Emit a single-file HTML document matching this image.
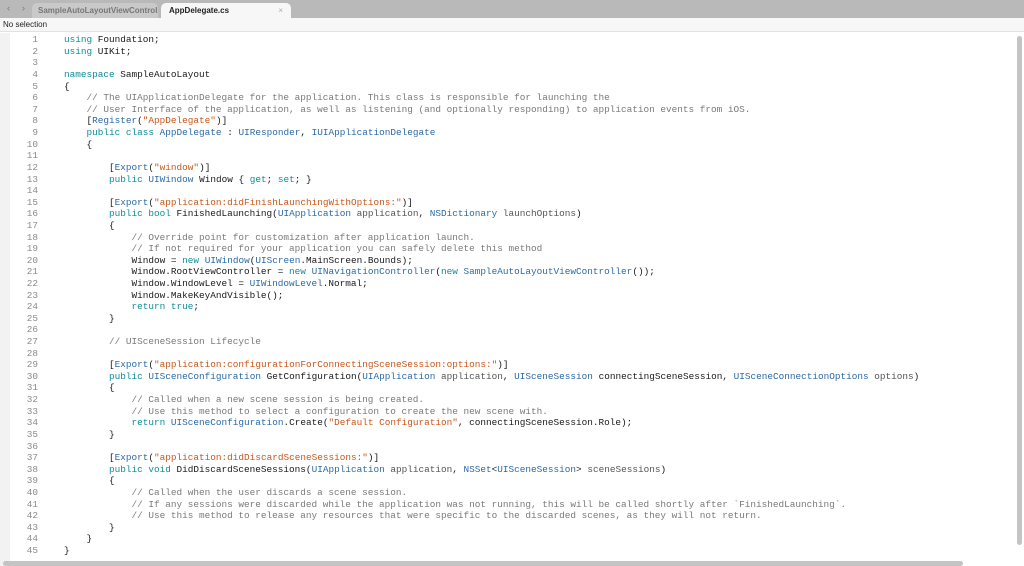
<!DOCTYPE html>
<html><head><meta charset="utf-8"><style>
html,body{margin:0;padding:0;width:1024px;height:566px;overflow:hidden;background:#fff;font-family:"Liberation Sans",sans-serif}
#tabs{position:absolute;left:0;top:0;width:1024px;height:18px;background:#b9b9b9}
.tab{position:absolute;top:3px;height:15px;font-size:8px;line-height:15px;border-radius:5px 5px 0 0;font-weight:bold}
#t1{left:32px;width:126px;background:#c9c9c9;color:#777;padding-left:6px;box-sizing:border-box;white-space:nowrap;overflow:hidden}
#t2{left:161px;width:130px;background:#f7f7f7;color:#222;padding-left:8px;box-sizing:border-box}
#t2 span{position:absolute;right:8px;top:0;color:#aaa;font-weight:normal}
.nav{position:absolute;top:3px;font-size:9px;color:#777}
#bar{position:absolute;left:0;top:18px;width:1024px;height:14px;background:#f7f7f7;border-bottom:1px solid #e2e2e2;font-size:8px;line-height:14px;color:#222;padding-left:3px;box-sizing:border-box}
#strip{position:absolute;left:0;top:33px;width:10px;height:533px;background:#f2f2f2}
#code{position:absolute;left:0;top:34.2px;font-family:"Liberation Mono",monospace;font-size:9.38px;line-height:11.61px;white-space:pre;color:#1a1a1a}
.ln{display:inline-block;width:38px;text-align:right;color:#8a8a8a;margin-right:26px}
.k{color:#0f8c9c}.t{color:#2c6aa6}.s{color:#c8571c}.c{color:#7a7a7a}.p{color:#555}
#vs{position:absolute;left:1017px;top:36px;width:5px;height:509px;background:#c4c4c4;border-radius:3px}
#hs{position:absolute;left:3px;top:561px;width:960px;height:5px;background:#c4c4c4;border-radius:3px}
</style></head><body>
<div id="tabs"><span class="nav" style="left:7px">&#8249;</span><span class="nav" style="left:22px">&#8250;</span>
<div class="tab" id="t1">SampleAutoLayoutViewControll</div>
<div class="tab" id="t2">AppDelegate.cs<span>&#215;</span></div></div>
<div id="bar">No selection</div>
<div id="strip"></div>
<div id="code"><span class="ln">1</span><span class="k">using</span> Foundation;
<span class="ln">2</span><span class="k">using</span> UIKit;
<span class="ln">3</span>
<span class="ln">4</span><span class="k">namespace</span> SampleAutoLayout
<span class="ln">5</span>{
<span class="ln">6</span>    <span class="c">// The UIApplicationDelegate for the application. This class is responsible for launching the</span>
<span class="ln">7</span>    <span class="c">// User Interface of the application, as well as listening (and optionally responding) to application events from iOS.</span>
<span class="ln">8</span>    [<span class="t">Register</span>(<span class="s">"AppDelegate"</span>)]
<span class="ln">9</span>    <span class="k">public class</span> <span class="t">AppDelegate</span> : <span class="t">UIResponder</span>, <span class="t">IUIApplicationDelegate</span>
<span class="ln">10</span>    {
<span class="ln">11</span>
<span class="ln">12</span>        [<span class="t">Export</span>(<span class="s">"window"</span>)]
<span class="ln">13</span>        <span class="k">public</span> <span class="t">UIWindow</span> Window { <span class="k">get</span>; <span class="k">set</span>; }
<span class="ln">14</span>
<span class="ln">15</span>        [<span class="t">Export</span>(<span class="s">"application:didFinishLaunchingWithOptions:"</span>)]
<span class="ln">16</span>        <span class="k">public bool</span> FinishedLaunching(<span class="t">UIApplication</span> <span class="p">application</span>, <span class="t">NSDictionary</span> <span class="p">launchOptions</span>)
<span class="ln">17</span>        {
<span class="ln">18</span>            <span class="c">// Override point for customization after application launch.</span>
<span class="ln">19</span>            <span class="c">// If not required for your application you can safely delete this method</span>
<span class="ln">20</span>            Window = <span class="k">new</span> <span class="t">UIWindow</span>(<span class="t">UIScreen</span>.MainScreen.Bounds);
<span class="ln">21</span>            Window.RootViewController = <span class="k">new</span> <span class="t">UINavigationController</span>(<span class="k">new</span> <span class="t">SampleAutoLayoutViewController</span>());
<span class="ln">22</span>            Window.WindowLevel = <span class="t">UIWindowLevel</span>.Normal;
<span class="ln">23</span>            Window.MakeKeyAndVisible();
<span class="ln">24</span>            <span class="k">return true</span>;
<span class="ln">25</span>        }
<span class="ln">26</span>
<span class="ln">27</span>        <span class="c">// UISceneSession Lifecycle</span>
<span class="ln">28</span>
<span class="ln">29</span>        [<span class="t">Export</span>(<span class="s">"application:configurationForConnectingSceneSession:options:"</span>)]
<span class="ln">30</span>        <span class="k">public</span> <span class="t">UISceneConfiguration</span> GetConfiguration(<span class="t">UIApplication</span> <span class="p">application</span>, <span class="t">UISceneSession</span> connectingSceneSession, <span class="t">UISceneConnectionOptions</span> <span class="p">options</span>)
<span class="ln">31</span>        {
<span class="ln">32</span>            <span class="c">// Called when a new scene session is being created.</span>
<span class="ln">33</span>            <span class="c">// Use this method to select a configuration to create the new scene with.</span>
<span class="ln">34</span>            <span class="k">return</span> <span class="t">UISceneConfiguration</span>.Create(<span class="s">"Default Configuration"</span>, connectingSceneSession.Role);
<span class="ln">35</span>        }
<span class="ln">36</span>
<span class="ln">37</span>        [<span class="t">Export</span>(<span class="s">"application:didDiscardSceneSessions:"</span>)]
<span class="ln">38</span>        <span class="k">public void</span> DidDiscardSceneSessions(<span class="t">UIApplication</span> <span class="p">application</span>, <span class="t">NSSet</span>&lt;<span class="t">UISceneSession</span>&gt; <span class="p">sceneSessions</span>)
<span class="ln">39</span>        {
<span class="ln">40</span>            <span class="c">// Called when the user discards a scene session.</span>
<span class="ln">41</span>            <span class="c">// If any sessions were discarded while the application was not running, this will be called shortly after `FinishedLaunching`.</span>
<span class="ln">42</span>            <span class="c">// Use this method to release any resources that were specific to the discarded scenes, as they will not return.</span>
<span class="ln">43</span>        }
<span class="ln">44</span>    }
<span class="ln">45</span>}
</div>
<div id="vs"></div><div id="hs"></div>
</body></html>
